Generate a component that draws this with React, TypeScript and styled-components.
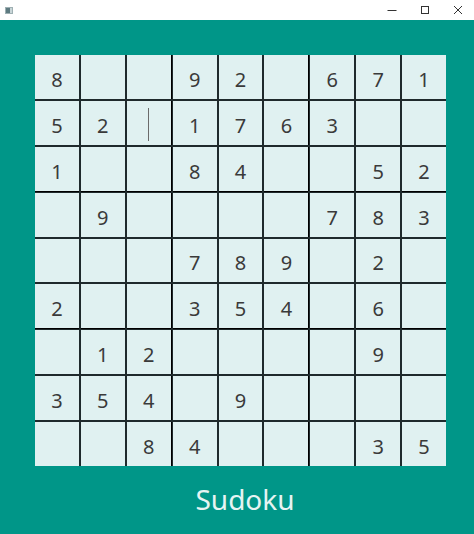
import styled, { createGlobalStyle } from "styled-components";

const GlobalStyle = createGlobalStyle`
  html, body {
    margin: 0;
    padding: 0;
    background: #009688;
  }
  * {
    box-sizing: border-box;
  }
`;

const Window = styled.div`
  width: 474px;
  height: 534px;
  display: flex;
  flex-direction: column;
  background-color: #009688;
  font-family: "Noto Sans", "Open Sans", sans-serif;
  overflow: hidden;
`;

const TitleBar = styled.div`
  height: 20px;
  background-color: #ffffff;
  display: flex;
  align-items: center;
  justify-content: space-between;
  padding-left: 5px;
`;

const AppIcon = styled.div`
  width: 8px;
  height: 7px;
  background: linear-gradient(90deg, #5d7a80 0 60%, #c9d6d8 60% 100%);
  border: 1px solid #9fb0b3;
`;

const Controls = styled.div`
  display: flex;
  height: 100%;
`;

const ControlButton = styled.div`
  width: 33px;
  height: 100%;
  display: flex;
  align-items: center;
  justify-content: center;
`;

const Board = styled.div`
  padding: 35px 0 0 35px;
`;

const Grid = styled.div`
  width: 411px;
  height: 411px;
  display: grid;
  grid-template-columns: repeat(9, 1fr);
  grid-template-rows: repeat(9, 1fr);
  gap: 2px;
  background-color: #1f2a2c;
`;

const Cell = styled.div<{ $right: boolean; $bottom: boolean }>`
  background-color: #e0f1f1;
  display: flex;
  align-items: center;
  justify-content: center;
  padding-top: 5px;
  font-size: 20px;
  color: #3a3a3a;
  box-shadow: ${({ $right, $bottom }) =>
    [$right ? "1px 0 0 #000" : "", $bottom ? "0 1px 0 #000" : ""]
      .filter(Boolean)
      .join(", ") || "none"};
`;

const Caret = styled.span`
  width: 1px;
  height: 33px;
  background-color: #6b6b6b;
  margin-top: -2px;
`;

const Footer = styled.div`
  flex: 1;
  display: flex;
  align-items: center;
  justify-content: center;
  padding-left: 16px;
  padding-bottom: 2px;
  color: #e6f4f3;
  font-size: 28px;
  font-family: "Noto Sans", "Open Sans", sans-serif;
`;

const puzzle = [
  "8..92.671",
  "52|1763..",
  "1..84..52",
  ".9....783",
  "...789.2.",
  "2..354.6.",
  ".12....9.",
  "354.9....",
  "..84...35",
];

const rows = puzzle.map((r) => r.split(""));

export default function App() {
  return (
    <>
      <GlobalStyle />
      <Window>
        <TitleBar>
          <AppIcon />
          <Controls>
            <ControlButton>
              <svg width="10" height="10" viewBox="0 0 10 10">
                <path d="M0.5 5.5h9" stroke="#333" strokeWidth="1" />
              </svg>
            </ControlButton>
            <ControlButton>
              <svg width="10" height="10" viewBox="0 0 10 10">
                <rect x="1.5" y="1.5" width="7" height="7" fill="none" stroke="#333" strokeWidth="1" />
              </svg>
            </ControlButton>
            <ControlButton>
              <svg width="10" height="10" viewBox="0 0 10 10">
                <path d="M1 1l8 8M9 1l-8 8" stroke="#333" strokeWidth="1" />
              </svg>
            </ControlButton>
          </Controls>
        </TitleBar>
        <Board>
          <Grid>
            {rows.map((row, r) =>
              row.map((ch, c) => (
                <Cell
                  key={`${r}-${c}`}
                  $right={c === 2 || c === 5}
                  $bottom={r === 2 || r === 5}
                >
                  {ch === "|" ? <Caret /> : ch === "." ? "" : ch}
                </Cell>
              ))
            )}
          </Grid>
        </Board>
        <Footer>Sudoku</Footer>
      </Window>
    </>
  );
}
